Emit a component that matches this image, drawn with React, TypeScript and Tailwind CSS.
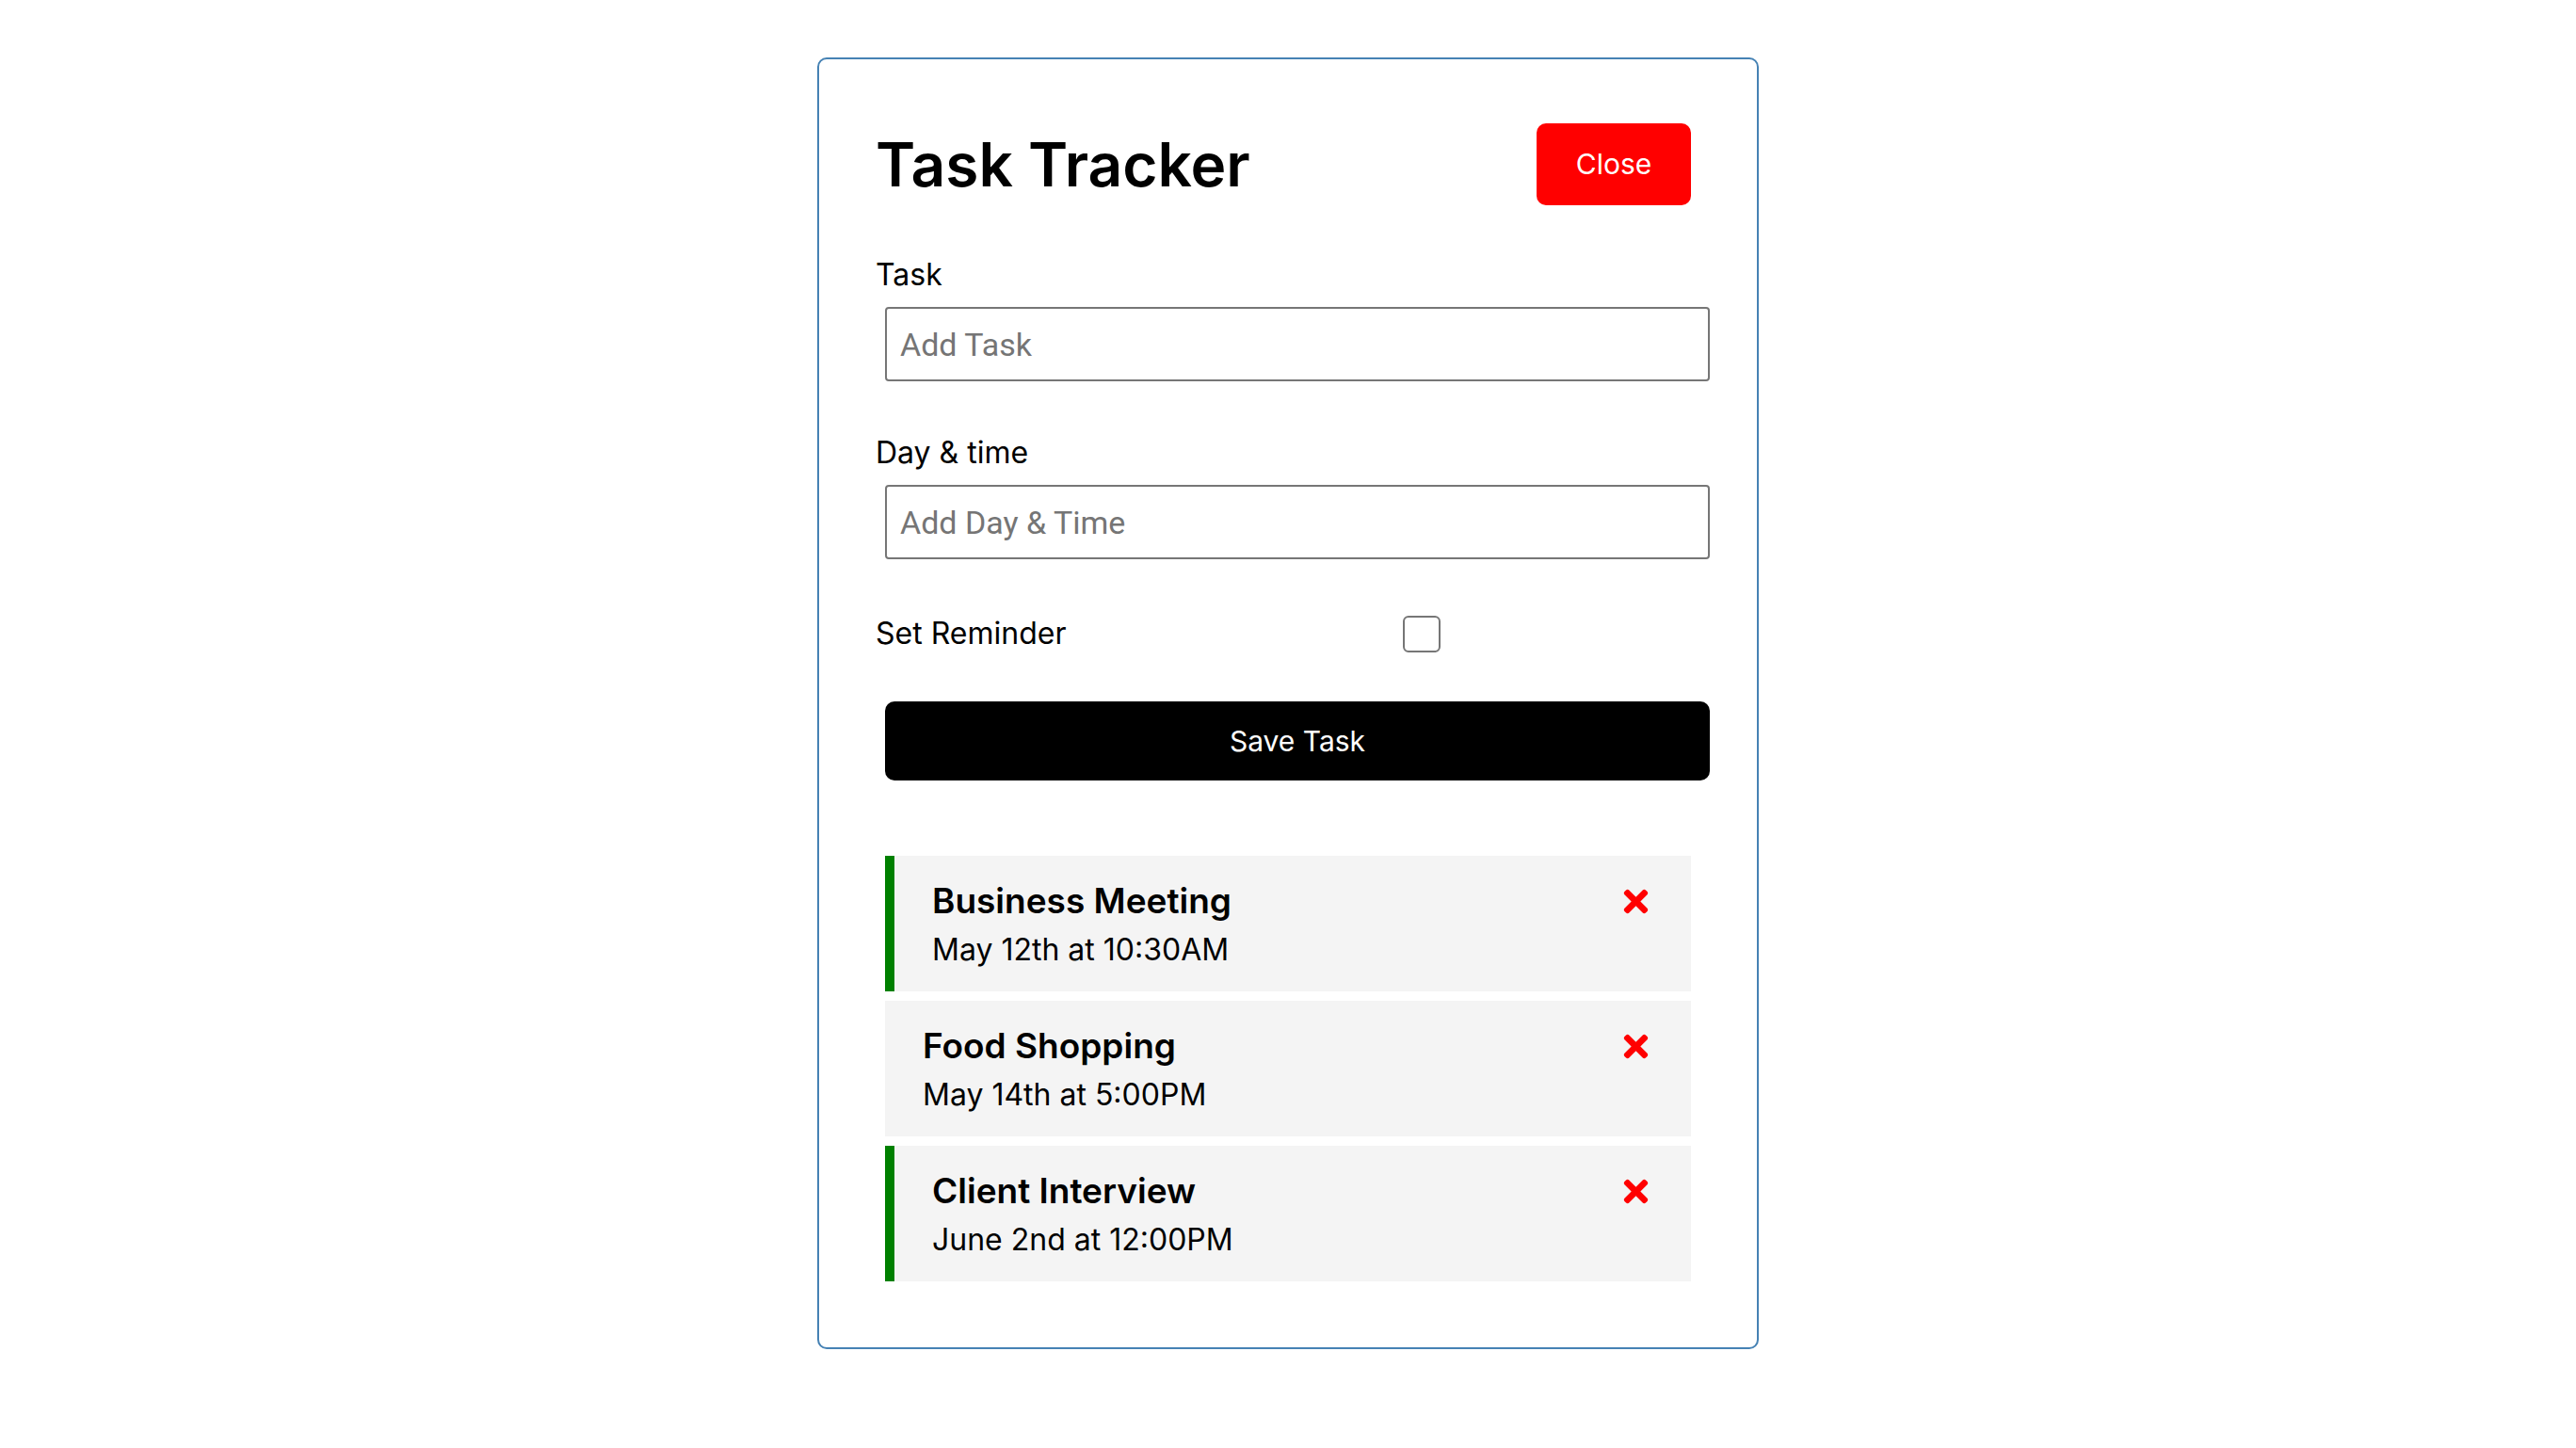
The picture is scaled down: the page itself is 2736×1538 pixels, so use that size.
import React, { useState } from "react";
import { FaTimes } from "react-icons/fa";

type Task = {
  id: number;
  text: string;
  day: string;
  reminder: boolean;
};

const initialTasks: Task[] = [
  { id: 1, text: "Business Meeting", day: "May 12th at 10:30AM", reminder: true },
  { id: 2, text: "Food Shopping", day: "May 14th at 5:00PM", reminder: false },
  { id: 3, text: "Client Interview", day: "June 2nd at 12:00PM", reminder: true },
];

function TaskItem({ task, onDelete }: { task: Task; onDelete: (id: number) => void }) {
  return (
    <div
      className={`bg-[#f4f4f4] ml-[10px] mr-[10px] px-[40px] py-[20px] cursor-pointer ${
        task.reminder ? "border-l-[10px] border-[#008000]" : ""
      }`}
    >
      <h3 className="flex items-center justify-between text-[37px] font-semibold leading-[56px]">
        {task.text}
        <FaTimes
          size={37}
          className="text-[#ff0000] cursor-pointer"
          onClick={() => onDelete(task.id)}
        />
      </h3>
      <p className="text-[32px] leading-[48px]">{task.day}</p>
    </div>
  );
}

export default function App() {
  const [tasks, setTasks] = useState<Task[]>(initialTasks);
  const [text, setText] = useState("");
  const [day, setDay] = useState("");
  const [reminder, setReminder] = useState(false);

  const deleteTask = (id: number) => {
    setTasks(tasks.filter((t) => t.id !== id));
  };

  const onSubmit = (e: React.FormEvent) => {
    e.preventDefault();
    if (!text) return;
    setTasks([...tasks, { id: Date.now(), text, day, reminder }]);
    setText("");
    setDay("");
    setReminder(false);
  };

  return (
    <div className="min-h-screen bg-white pt-[61px] text-black font-['Inter','Noto_Sans',sans-serif]">
      <div className="mx-auto w-[1000px] rounded-[10px] border-2 border-[#4682b4] px-[60px] pt-[58px] pb-[70px]">
        <header className="flex h-[107px] items-center justify-between">
          <h1 className="text-[64px] font-semibold leading-none">Task Tracker</h1>
          <button className="m-[10px] h-[87px] w-[164px] rounded-[10px] bg-[#ff0000] text-[30px] text-white">
            Close
          </button>
        </header>

        <form onSubmit={onSubmit}>
          <div className="mt-[40px]">
            <label className="block text-[32px] leading-[48px]">Task</label>
            <input
              type="text"
              placeholder="Add Task"
              value={text}
              onChange={(e) => setText(e.target.value)}
              className="mt-[10px] ml-[10px] block h-[79px] w-full rounded-[4px] border-2 border-[#767676] px-[14px] font-['Roboto',sans-serif] text-[34px] placeholder:text-[#757575] outline-none"
            />
          </div>
          <div className="mt-[52px]">
            <label className="block text-[32px] leading-[48px]">Day &amp; time</label>
            <input
              type="text"
              placeholder="Add Day & Time"
              value={day}
              onChange={(e) => setDay(e.target.value)}
              className="mt-[10px] ml-[10px] block h-[79px] w-full rounded-[4px] border-2 border-[#767676] px-[14px] font-['Roboto',sans-serif] text-[34px] placeholder:text-[#757575] outline-none"
            />
          </div>
          <div className="mt-[49px] flex h-[60px] items-center">
            <label className="w-[560px] text-[32px] leading-[48px]">Set Reminder</label>
            <input
              type="checkbox"
              checked={reminder}
              onChange={(e) => setReminder(e.currentTarget.checked)}
              className="h-[39px] w-[40px] appearance-none rounded-[6px] border-2 border-[#767676] bg-white checked:bg-[#0075ff] checked:border-[#0075ff]"
            />
          </div>
          <button
            type="submit"
            className="mt-[42px] ml-[10px] block h-[84px] w-full rounded-[10px] bg-black text-[30px] text-white"
          >
            Save Task
          </button>
        </form>

        <div className="mt-[80px] flex flex-col gap-[10px]">
          {tasks.map((task) => (
            <TaskItem key={task.id} task={task} onDelete={deleteTask} />
          ))}
        </div>
      </div>
    </div>
  );
}
